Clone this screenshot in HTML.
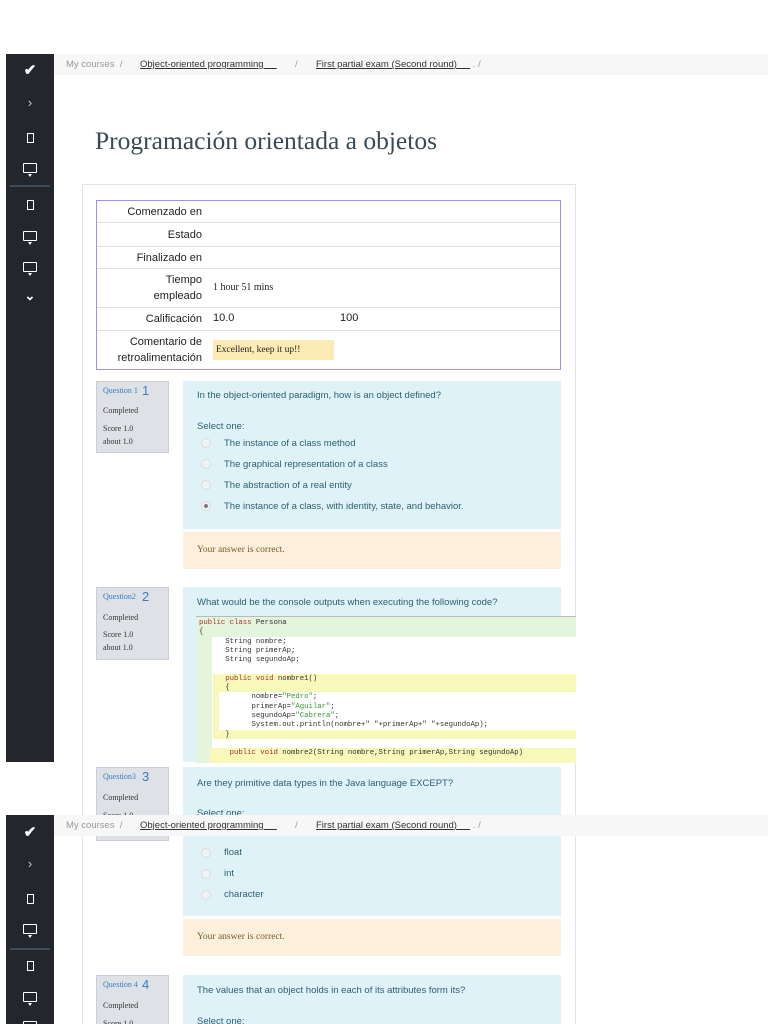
<!DOCTYPE html><html><head><meta charset="utf-8"><style>
html,body{margin:0;width:768px;height:1024px;overflow:hidden}
body{background:#fff;position:relative;font-family:"Liberation Sans",sans-serif}
.a{position:absolute}
.sb{background:#23272d;left:6px;width:48px}
.ic{position:absolute;left:0;width:48px;text-align:center;color:#fff}
.bc{background:#f7f7f7;left:54px;width:714px;height:21px;font-size:9.5px;color:#999;line-height:21px}
.bc span{position:absolute}
.bc u{color:#333}
.info{background:#dee2e6;border:1px solid #ccd;left:96px;width:71px;font-family:"Liberation Serif",serif;font-size:8px;color:#333}
.info .q{position:absolute;left:6px;top:4px;color:#3a7ac0;font-size:8px}
.info .n{position:absolute;left:45px;top:1px;color:#3a7ac0;font-size:13px;font-family:"Liberation Sans",sans-serif}
.cont{background:#def2f8;left:183px;width:378px;font-size:9.5px;color:#2f5f6f}
.fb{background:#fcefdc;left:183px;width:378px;height:37px;font-family:"Liberation Serif",serif;font-size:9.5px;color:#7a5a2a;line-height:37px;text-indent:14px}
.r{position:absolute;left:18px;width:8px;height:8px;border-radius:50%;background:#f0f3f4;border:1px solid #d8dcdc}
.o{position:absolute;left:41px}
.row{position:absolute;left:0;width:463px;border-bottom:1px solid #dee2e6;font-size:11px;color:#222}
.row .l{position:absolute;right:358px;text-align:right;line-height:16px}
.row .v{position:absolute;left:116px}
.mon{display:inline-block;width:12px;height:8px;border:1.5px solid #fff;border-radius:1px;position:relative}
.mon:after{content:"";position:absolute;left:4px;top:10px;border:2px solid transparent;border-top:3px solid #fff}
.ph{display:inline-block;width:5px;height:8px;border:1px solid #fff}
</style></head><body>
<div class="a bc" style="top:54px"><span style="left:12px">My courses &nbsp;/</span><span style="left:86px"><u>Object-oriented programming&nbsp;&nbsp;&nbsp;&nbsp;&nbsp;</u></span><span style="left:241px">/</span><span style="left:262px"><u>First partial exam (Second round)&nbsp;&nbsp;&nbsp;&nbsp;&nbsp;</u> . /</span></div>
<div class="a sb" style="top:54px;height:708px">
<div class="ic" style="top:7px;font-size:15px;font-weight:bold">✔</div>
<div class="ic" style="top:41px;font-size:13px;color:#ccc">›</div>
<div class="ic" style="top:76px"><span class="ph"></span></div>
<div class="ic" style="top:106px"><span class="mon"></span></div>
<div class="a" style="left:4px;top:131px;width:40px;height:2px;background:#3c4c58"></div>
<div class="ic" style="top:143px"><span class="ph"></span></div>
<div class="ic" style="top:174px"><span class="mon"></span></div>
<div class="ic" style="top:205px"><span class="mon"></span></div>
<div class="ic" style="top:234px;font-size:13px;font-weight:bold">⌄</div>
</div>
<div class="a" style="left:95px;top:126px;font-family:'Liberation Serif',serif;font-size:25.5px;color:#3a4a55">Programación orientada a objetos</div>
<div class="a" style="left:82px;top:184px;width:492px;height:840px;border:1px solid #e3e3e3;border-bottom:none"></div>
<div class="a" style="left:96px;top:200px;width:463px;height:168px;border:1.5px solid #a58cf0">
<div class="row" style="top:0;height:21px"><span class="l" style="top:3px">Comenzado en</span></div>
<div class="row" style="top:22px;height:23px"><span class="l" style="top:4px">Estado</span></div>
<div class="row" style="top:46px;height:21px"><span class="l" style="top:3px">Finalizado en</span></div>
<div class="row" style="top:68px;height:38px"><span class="l" style="top:3px">Tiempo<br>empleado</span><span class="v" style="top:13px;font-family:'Liberation Serif',serif;font-size:10px">1 hour 51 mins</span></div>
<div class="row" style="top:107px;height:22px"><span class="l" style="top:3px">Calificación</span><span class="v" style="top:4px">10.0</span><span class="v" style="left:243px;top:4px">100</span></div>
<div class="row" style="top:130px;height:37px;border:none"><span class="l" style="top:3px">Comentario de<br>retroalimentación</span><span class="v" style="top:9px;background:#fdebb5;width:121px;height:20px;font-family:'Liberation Serif',serif;font-size:9.5px;line-height:20px;text-indent:3px">Excellent, keep it up!!</span></div>
</div>

<div class="a info" style="top:381px;height:70px"><span class="q">Question 1</span><span class="n">1</span><span class="a" style="left:6px;top:24px">Completed</span><span class="a" style="left:6px;top:42px">Score 1.0</span><span class="a" style="left:6px;top:55px">about 1.0</span></div>
<div class="a cont" style="top:381px;height:148px"><span class="o" style="left:14px;top:9px">In the object-oriented paradigm, how is an object defined?</span><span class="o" style="left:14px;top:40px">Select one:</span>
<span class="r" style="top:57px"></span><span class="o" style="top:57px">The instance of a class method</span>
<span class="r" style="top:78px"></span><span class="o" style="top:78px">The graphical representation of a class</span>
<span class="r" style="top:99px"></span><span class="o" style="top:99px">The abstraction of a real entity</span>
<span class="r" style="top:120px;background:radial-gradient(#777 30%,#f0f3f4 40%)"></span><span class="o" style="top:120px">The instance of a class, with identity, state, and behavior.</span></div>
<div class="a fb" style="top:532px">Your answer is correct.</div>

<div class="a info" style="top:587px;height:71px"><span class="q">Question2</span><span class="n">2</span><span class="a" style="left:6px;top:25px">Completed</span><span class="a" style="left:6px;top:42px">Score 1.0</span><span class="a" style="left:6px;top:55px">about 1.0</span></div>
<div class="a cont" style="top:587px;height:175px"><span class="o" style="left:14px;top:10px">What would be the console outputs when executing the following code?</span></div>
<div class="a" style="left:196px;top:616px;width:380px;height:146px;background:#fff;border-top:1px solid #bbb;font-family:'Liberation Mono',monospace;font-size:7.3px;color:#333;line-height:9.3px;overflow:hidden">
<div class="a" style="left:0;top:0;width:380px;height:20px;background:#e3f5dc"></div>
<div class="a" style="left:0;top:20px;width:16px;height:126px;background:#e3f5dc"></div>
<div class="a" style="left:17px;top:57px;width:363px;height:65px;background:#f8f8b8"></div>
<div class="a" style="left:23px;top:75px;width:357px;height:38px;background:#fff"></div>
<div class="a" style="left:14px;top:131px;width:366px;height:15px;background:#f8f8b8"></div>
<pre class="a" style="margin:0;left:3px;top:2px;font:inherit"><span style="color:#a33">public class</span> Persona
{
      String nombre;
      String primerAp;
      String segundoAp;

      <span style="color:#a33">public void</span> nombre1()
      {
            nombre=<span style="color:#393">"Pedro"</span>;
            primerAp=<span style="color:#393">"Aguilar"</span>;
            segundoAp=<span style="color:#393">"Cabrera"</span>;
            System.out.println(nombre+" "+primerAp+" "+segundoAp);
      }

       <span style="color:#a33">public void</span> nombre2(String nombre,String primerAp,String segundoAp)</pre></div>

<div class="a info" style="top:767px;height:72px"><span class="q">Question3</span><span class="n">3</span><span class="a" style="left:6px;top:25px">Completed</span><span class="a" style="left:6px;top:43px">Score 1.0</span></div>
<div class="a cont" style="top:767px;height:149px"><span class="o" style="left:14px;top:11px">Are they primitive data types in the Java language EXCEPT?</span><span class="o" style="left:14px;top:41px">Select one:</span>
<span class="r" style="top:81px"></span><span class="o" style="top:80px">float</span>
<span class="r" style="top:102px"></span><span class="o" style="top:101px">int</span>
<span class="r" style="top:123px"></span><span class="o" style="top:122px">character</span></div>
<div class="a fb" style="top:919px">Your answer is correct.</div>

<div class="a info" style="top:975px;height:60px"><span class="q">Question 4</span><span class="n">4</span><span class="a" style="left:6px;top:25px">Completed</span><span class="a" style="left:6px;top:43px">Score 1.0</span></div>
<div class="a cont" style="top:975px;height:60px"><span class="o" style="left:14px;top:10px">The values that an object holds in each of its attributes form its?</span><span class="o" style="left:14px;top:41px">Select one:</span></div>

<div class="a bc" style="top:815px"><span style="left:12px">My courses &nbsp;/</span><span style="left:86px"><u>Object-oriented programming&nbsp;&nbsp;&nbsp;&nbsp;&nbsp;</u></span><span style="left:241px">/</span><span style="left:262px"><u>First partial exam (Second round)&nbsp;&nbsp;&nbsp;&nbsp;&nbsp;</u> . /</span></div>
<div class="a sb" style="top:815px;height:209px;overflow:hidden">
<div class="ic" style="top:8px;font-size:15px;font-weight:bold">✔</div>
<div class="ic" style="top:41px;font-size:13px;color:#ccc">›</div>
<div class="ic" style="top:76px"><span class="ph"></span></div>
<div class="ic" style="top:106px"><span class="mon"></span></div>
<div class="a" style="left:4px;top:133px;width:40px;height:2px;background:#3c4c58"></div>
<div class="ic" style="top:143px"><span class="ph"></span></div>
<div class="ic" style="top:174px"><span class="mon"></span></div>
<div class="ic" style="top:203px"><span class="mon"></span></div>
</div>
</body></html>
